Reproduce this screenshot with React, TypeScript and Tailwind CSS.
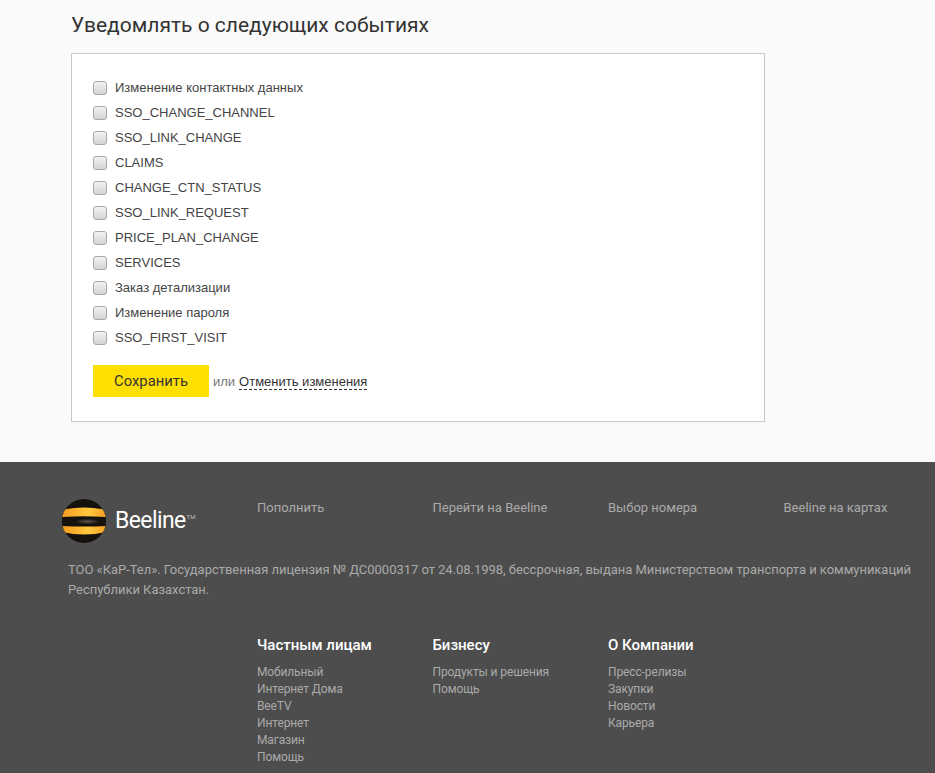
import React from 'react';

const events = [
  'Изменение контактных данных',
  'SSO_CHANGE_CHANNEL',
  'SSO_LINK_CHANGE',
  'CLAIMS',
  'CHANGE_CTN_STATUS',
  'SSO_LINK_REQUEST',
  'PRICE_PLAN_CHANGE',
  'SERVICES',
  'Заказ детализации',
  'Изменение пароля',
  'SSO_FIRST_VISIT',
];

const topLinks = ['Пополнить', 'Перейти на Beeline', 'Выбор номера', 'Beeline на картах'];

const columns = [
  { title: 'Частным лицам', links: ['Мобильный', 'Интернет Дома', 'BeeTV', 'Интернет', 'Магазин', 'Помощь'] },
  { title: 'Бизнесу', links: ['Продукты и решения', 'Помощь'] },
  { title: 'О Компании', links: ['Пресс-релизы', 'Закупки', 'Новости', 'Карьера'] },
];

const BeelineLogo = () => (
  <svg width="44" height="44" viewBox="0 0 44 44" className="shrink-0">
    <defs>
      <clipPath id="ball">
        <circle cx="22" cy="22" r="22" />
      </clipPath>
      <linearGradient id="stripe" x1="0" y1="0" x2="1" y2="0">
        <stop offset="0" stopColor="#f59a1c" />
        <stop offset="0.6" stopColor="#ffc93f" />
        <stop offset="1" stopColor="#f4a020" />
      </linearGradient>
      <radialGradient id="shine" cx="0.58" cy="0.5" r="0.28">
        <stop offset="0" stopColor="#5f574b" />
        <stop offset="1" stopColor="#15120e" />
      </radialGradient>
    </defs>
    <g clipPath="url(#ball)">
      <rect width="44" height="44" fill="#15120e" />
      <path d="M0 11 Q22 6 44 11 L44 18 Q22 17 0 18 Z" fill="url(#stripe)" />
      <path d="M0 18 Q22 17 44 18 L44 27 Q22 28 0 27 Z" fill="url(#shine)" />
      <path d="M0 27 Q22 28 44 27 L44 33 Q22 38 0 33 Z" fill="url(#stripe)" />
    </g>
  </svg>
);

export default function App() {
  return (
    <div className="w-[935px] h-[773px] overflow-hidden bg-[#fafafa] font-['Roboto',sans-serif]">
      <main className="h-[462px] pl-[71px] pt-[12px]">
        <h2 className="text-[21px] leading-[27px] text-[#333]">Уведомлять о следующих событиях</h2>
        <div className="mt-[14px] w-[694px] h-[369px] border border-[#c8c8c8] bg-white pl-[21px] pt-[21px]">
          <ul className="flex flex-col">
            {events.map((name) => (
              <li key={name} className="flex h-[25px] items-center gap-[8px] font-['Liberation_Sans',sans-serif] text-[13px] text-[#444]">
                <span className="h-[14px] w-[14px] rounded-[3px] border border-[#a8a8a8] bg-gradient-to-b from-[#f2f2f2] to-[#d4d4d4]" />
                <span>{name}</span>
              </li>
            ))}
          </ul>
          <div className="mt-[15px] flex items-center font-['Liberation_Sans',sans-serif]">
            <button className="h-[32px] w-[116px] bg-[#ffdf00] font-['Roboto',sans-serif] text-[14.8px] text-[#333]">Сохранить</button>
            <span className="ml-[4px] mt-[1px] text-[13px] text-[#777]">или</span>
            <span className="ml-[4px] mt-[1px] border-b border-dashed border-[#333] text-[13px] leading-[15px] text-[#333]">
              Отменить изменения
            </span>
          </div>
        </div>
      </main>
      <footer className="h-[311px] bg-[#4d4d4d] pt-[37px]">
        <div className="flex h-[44px]">
          <div className="ml-[62px] flex w-[195px] shrink-0 items-start">
            <BeelineLogo />
            <span className="ml-[9px] mt-[7px] text-[23px] leading-[30px] tracking-[-0.6px] text-white">Beeline</span>
            <span className="ml-[1px] mt-[15px] text-[6px] leading-[6px] text-[#bbb]">TM</span>
          </div>
          {topLinks.map((link) => (
            <a key={link} className="w-[175.5px] shrink-0 text-[13px] leading-[17px] text-[#aaa]">
              {link}
            </a>
          ))}
        </div>
        <p className="ml-[68px] mt-[17px] w-[860px] text-[13px] leading-[20px] tracking-[-0.03px] text-[#aaa]">
          ТОО «КаР-Тел». Государственная лицензия № ДС0000317 от 24.08.1998, бессрочная, выдана Министерством транспорта и коммуникаций Республики Казахстан.
        </p>
        <div className="ml-[257px] mt-[35px] flex">
          {columns.map((col) => (
            <div key={col.title} className="w-[175.5px]">
              <h3 className="text-[15px] font-medium leading-[20px] text-white">{col.title}</h3>
              <ul className="mt-[9px] flex flex-col">
                {col.links.map((link) => (
                  <li key={link} className="h-[17px] text-[12px] leading-[17px] tracking-[-0.12px] text-[#aaa]">
                    {link}
                  </li>
                ))}
              </ul>
            </div>
          ))}
        </div>
      </footer>
    </div>
  );
}
